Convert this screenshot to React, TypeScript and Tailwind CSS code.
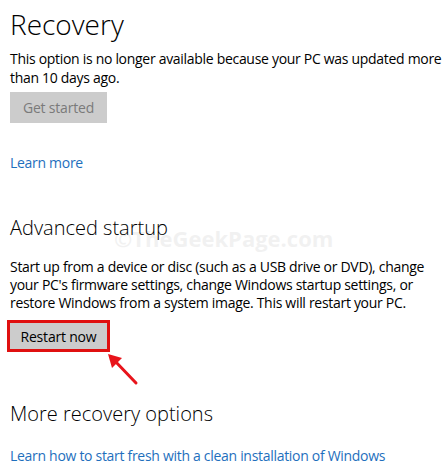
import React from 'react';

const font = { fontFamily: '"Open Sans", "Noto Sans", sans-serif' };

export default function App() {
  return (
    <div className="relative w-[443px] h-[472px] bg-white overflow-hidden text-black" style={font}>
      {/* watermark */}
      <div className="absolute left-[114px] top-[222px] text-[22px] font-bold text-black opacity-[0.05] pointer-events-none">
        ©TheGeekPage.com
      </div>

      <div className="relative px-[10px] pt-[6px] flex flex-col">
        <h1 className="text-[28px] font-light leading-[36px]">Recovery</h1>
        <p className="mt-[7px] text-[14px] tracking-[-0.3px] leading-[19px] whitespace-nowrap">
          This option is no longer available because your PC was updated more
          <br />
          than 10 days ago.
        </p>
        <div className="mt-[5px]">
          <button className="w-[97px] h-[31px] bg-[#cccccc] text-[#7a7a7a] text-[14px] tracking-[-0.2px]">
            Get started
          </button>
        </div>
        <a className="mt-[30px] text-[14px] tracking-[-0.3px] leading-[19px] text-[#1e6fbd]">Learn more</a>
        <h2 className="mt-[42px] text-[20px] font-light leading-[28px]">Advanced startup</h2>
        <p className="mt-[16px] text-[14px] tracking-[-0.3px] leading-[18px] whitespace-nowrap">
          Start up from a device or disc (such as a USB drive or DVD), change
          <br />
          your PC's firmware settings, change Windows startup settings, or
          <br />
          restore Windows from a system image. This will restart your PC.
        </p>
        <div className="mt-[8px] -ml-[3px]">
          <div className="inline-flex border-[3px] border-[#e01010]">
            <button className="w-[97px] h-[26px] bg-[#cccccc] text-[14px] tracking-[-0.2px]">Restart now</button>
          </div>
        </div>
        <h2 className="mt-[48px] text-[20px] font-light leading-[28px]">More recovery options</h2>
        <a className="mt-[18px] text-[14px] tracking-[-0.3px] leading-[19px] text-[#1e6fbd] whitespace-nowrap">
          Learn how to start fresh with a clean installation of Windows
        </a>
      </div>

      {/* red arrow */}
      <svg className="absolute left-[100px] top-[346px]" width="44" height="44" viewBox="0 0 44 44">
        <line x1="36" y1="37" x2="14" y2="14" stroke="#e8141b" strokeWidth="3" strokeLinecap="round" />
        <polygon points="8,8 22,12 12,22" fill="#e8141b" />
      </svg>
    </div>
  );
}
